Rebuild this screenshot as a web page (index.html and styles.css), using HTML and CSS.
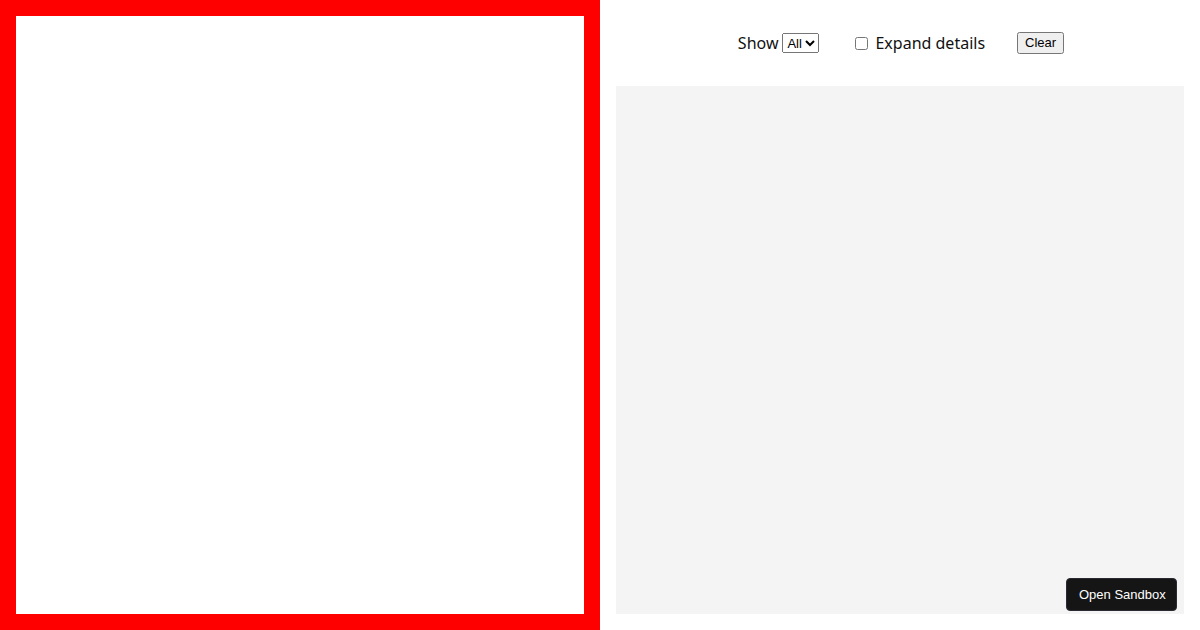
FILE: index.html
```html
<!DOCTYPE html>
<html>
<head>
<meta charset="utf-8">
<link rel="stylesheet" href="styles.css">
</head>
<body>
<div class="page">
  <div class="frame-col">
    <div class="frame"></div>
  </div>
  <div class="side">
    <div class="controls">
      <label class="ctl">Show <select class="sel"><option>All</option></select></label>
      <label class="ctl chk"><input type="checkbox" class="cb"> Expand details</label>
      <button class="clear">Clear</button>
    </div>
    <div class="log">
      <button class="sandbox">Open Sandbox</button>
    </div>
  </div>
</div>
</body>
</html>
```
FILE: styles.css
```css
html, body {
  margin: 0;
  padding: 0;
  background: #fff;
  font-family: "Noto Sans", "Open Sans", sans-serif;
  font-size: 16px;
  color: #111;
}
.page {
  display: grid;
  grid-template-columns: 600px 600px;
  height: 630px;
  overflow: hidden;
}
.frame-col {
  height: 630px;
}
.frame {
  box-sizing: border-box;
  height: 630px;
  border: 16px solid #ff0000;
  background: #fff;
}
.side {
  display: flex;
  flex-direction: column;
  padding: 0 16px 16px;
  height: 630px;
  box-sizing: border-box;
}
.controls {
  height: 86px;
  display: flex;
  align-items: center;
  justify-content: center;
  gap: 36px;
  padding-left: 2px;
}
.ctl {
  display: flex;
  align-items: center;
  gap: 4px;
}
.chk {
  gap: 7px;
  margin-right: -4px;
}
.cb {
  margin: 0;
  width: 13px;
  height: 13px;
}
.sel {
  font-size: 13px;
  font-family: "Liberation Sans", Arial, sans-serif;
  height: 20px;
}
.clear {
  font-size: 13px;
  font-family: "Liberation Sans", Arial, sans-serif;
  height: 22px;
  margin-top: -1px;
}
.log {
  flex: 1;
  background: #f4f4f4;
  position: relative;
}
.sandbox {
  position: absolute;
  right: 7px;
  bottom: 3px;
  background: #151515;
  color: #fff;
  border: 1px solid #2a2a35;
  border-radius: 4px;
  font-family: "Liberation Sans", Arial, sans-serif;
  font-size: 13px;
  padding: 0 12px;
  height: 33px;
  width: 111px;
  white-space: nowrap;
}
```
